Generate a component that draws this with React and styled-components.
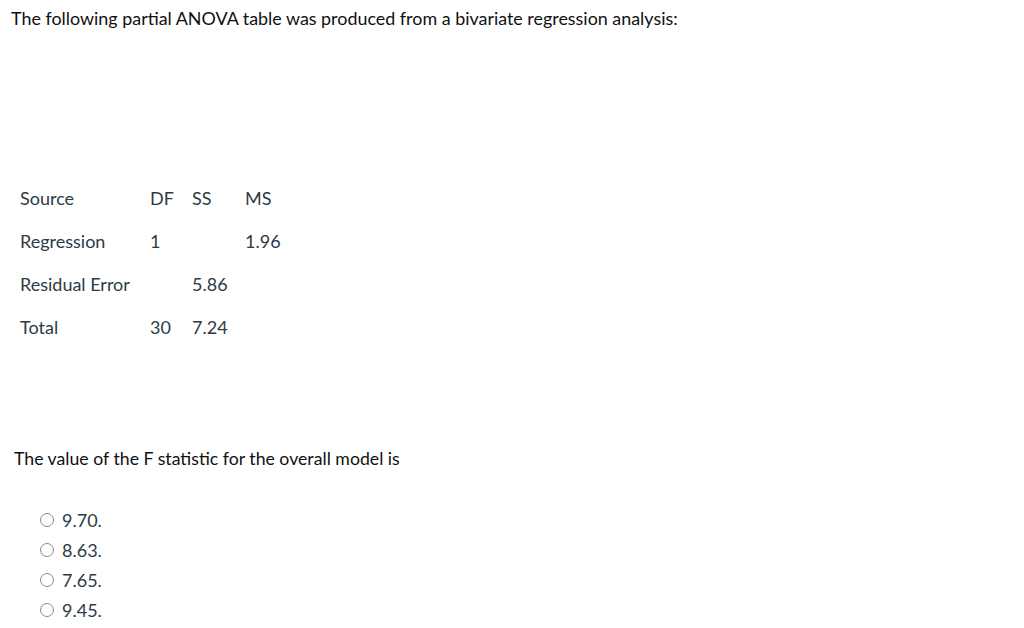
import React from 'react';
import styled, { createGlobalStyle } from 'styled-components';

const GlobalStyle = createGlobalStyle`
    body {
        margin: 0;
        background: #fff;
        font-family: Lato, "Open Sans", sans-serif;
    }
`;

const rows = [
    { source: 'Source', df: 'DF', ss: 'SS', ms: 'MS' },
    { source: 'Regression', df: '1', ss: '', ms: '1.96' },
    { source: 'Residual Error', df: '', ss: '5.86', ms: '' },
    { source: 'Total', df: '30', ss: '7.24', ms: '' },
];

const options = ['9.70.', '8.63.', '7.65.', '9.45.'];

const App = () => {
    return (
        <Page>
            <GlobalStyle />
            <Intro>The following partial ANOVA table was produced from a bivariate regression analysis:</Intro>
            <AnovaTable>
                <tbody>
                    {rows.map((row) => (
                        <tr key={row.source}>
                            <SourceCell>{row.source}</SourceCell>
                            <DfCell>{row.df}</DfCell>
                            <SsCell>{row.ss}</SsCell>
                            <MsCell>{row.ms}</MsCell>
                        </tr>
                    ))}
                </tbody>
            </AnovaTable>
            <Question>The value of the F statistic for the overall model is</Question>
            <Options>
                {options.map((opt) => (
                    <Option key={opt}>
                        <Radio />
                        <span>{opt}</span>
                    </Option>
                ))}
            </Options>
        </Page>
    );
};

export default App;

const Page = styled.div`
    padding: 8px 0 0 0;
`;

const Intro = styled.p`
    margin: 0 0 0 11px;
    font-size: 17.9px;
    line-height: 20px;
    color: #111;
`;

const AnovaTable = styled.table`
    margin: 148px 0 0 14px;
    border-collapse: collapse;
    font-size: 18px;
    color: #2d3b45;

    td {
        padding: 0 6px;
        height: 43px;
        vertical-align: middle;
        white-space: nowrap;
    }
`;

const SourceCell = styled.td`
    width: 118px;
`;

const DfCell = styled.td`
    width: 30px;
`;

const SsCell = styled.td`
    width: 41px;
`;

const MsCell = styled.td`
    width: 40px;
`;

const Question = styled.p`
    margin: 101px 0 0 14px;
    font-size: 17.7px;
    line-height: 20px;
    color: #111;
`;

const Options = styled.div`
    display: flex;
    flex-direction: column;
    margin: 36px 0 0 40px;
`;

const Option = styled.label`
    display: flex;
    align-items: center;
    gap: 8px;
    height: 30px;
    font-size: 18px;
    color: #2d3b45;
`;

const Radio = styled.span`
    width: 12px;
    height: 12px;
    border: 1px solid #8a8a8a;
    border-radius: 50%;
    flex-shrink: 0;
`;
